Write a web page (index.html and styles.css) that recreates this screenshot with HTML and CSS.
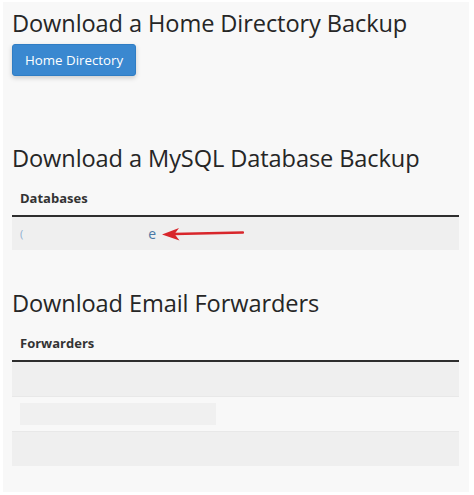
FILE: index.html
```html
<!DOCTYPE html>
<html>
<head>
<meta charset="utf-8">
<link rel="stylesheet" href="styles.css">
</head>
<body>
<div class="page">
  <section class="block">
    <h2 class="title">Download a Home Directory Backup</h2>
    <button class="btn">Home Directory</button>
  </section>

  <section class="block block-db">
    <h2 class="title">Download a MySQL Database Backup</h2>
    <table class="tbl">
      <thead><tr><th>Databases</th></tr></thead>
      <tbody>
        <tr class="odd">
          <td>
            <span class="dbcell">
              <a class="dblink"><span class="blur-a">(</span><span class="blur-gap"></span>e</a>
              <svg class="arrow" width="82" height="14" viewBox="0 0 82 14">
                <line x1="12" y1="7" x2="81" y2="5.5" stroke="#d8262b" stroke-width="2.5" stroke-linecap="round"/>
                <polygon points="0,7.5 17,1 12.5,7 17.5,13.5" fill="#d8262b"/>
              </svg>
            </span>
          </td>
        </tr>
      </tbody>
    </table>
  </section>

  <section class="block block-fw">
    <h2 class="title">Download Email Forwarders</h2>
    <table class="tbl tbl-fw">
      <thead><tr><th>Forwarders</th></tr></thead>
      <tbody>
        <tr class="odd"><td></td></tr>
        <tr class="even"><td><span class="placeholder"></span></td></tr>
        <tr class="odd"><td></td></tr>
      </tbody>
    </table>
  </section>
</div>
</body>
</html>
```

FILE: styles.css
```css
html, body {
  margin: 0;
  padding: 0;
  background: #ffffff;
}
body {
  padding: 2px 5px 3px 3px;
  font-family: "Open Sans", "Noto Sans", sans-serif;
  color: #333333;
}
.page {
  background: #f8f8f8;
  height: 490px;
  box-sizing: border-box;
  padding: 0 10px 0 9px;
}
.block {
  margin: 0;
}
.title {
  margin: 0;
  padding-top: 6px;
  font-size: 23.6px;
  font-weight: 400;
  line-height: 30px;
  color: #262626;
  letter-spacing: -0.1px;
}
.btn {
  margin-top: 6px;
  height: 32px;
  padding: 0 12px;
  border: 1px solid #2f7dc4;
  border-radius: 3px;
  background: #3a88d0;
  color: #ffffff;
  font-family: "Open Sans", "Noto Sans", sans-serif;
  font-size: 13.3px;
  box-shadow: 0 2px 5px rgba(0,0,0,0.18);
}
.block-db {
  margin-top: 61px;
}
.block-fw {
  margin-top: 32px;
}
.tbl {
  width: 100%;
  border-collapse: collapse;
  margin-top: 8px;
}
.tbl th {
  text-align: left;
  font-size: 13px;
  font-weight: 700;
  color: #333333;
  padding: 8px 8px 8px 8px;
  line-height: 18px;
  border-bottom: 2px solid #2e2e2e;
}
.tbl td {
  height: 34px;
  padding: 0 8px;
  box-sizing: border-box;
  font-size: 13px;
  border-top: 1px solid #e8e8e8;
}
.tbl-fw td {
  height: 35px;
}
.tbl tbody tr:first-child td {
  border-top: none;
}
.odd td {
  background: #efefef;
}
.even td {
  background: #f8f8f8;
}
.dbcell {
  display: flex;
  align-items: center;
}
.dblink {
  color: #4a78a6;
  font-size: 14px;
  display: flex;
  align-items: center;
}
.blur-a {
  color: #8eaed0;
  font-size: 11px;
}
.blur-gap {
  display: inline-block;
  width: 125px;
}
.arrow {
  margin-left: 6px;
  display: block;
}
.placeholder {
  display: block;
  width: 196px;
  height: 22px;
  background: #f0f0f0;
}
```
